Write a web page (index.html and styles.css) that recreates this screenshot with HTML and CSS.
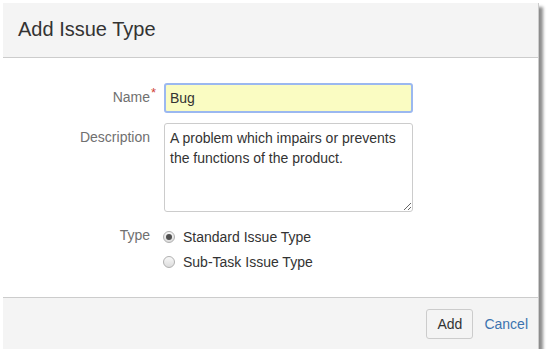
FILE: index.html
```html
<!DOCTYPE html>
<html lang="en">
<head>
    <meta charset="UTF-8">
    <title>Add Issue Type</title>
    <link rel="stylesheet" href="styles.css">
</head>
<body>
    <div class="dialog">
        <div class="dialog-header">
            <h2>Add Issue Type</h2>
        </div>

        <form class="dialog-body">
            <div class="field-group">
                <label for="name">Name<span class="required">*</span></label>
                <input type="text" id="name" class="text name-input" value="Bug">
            </div>

            <div class="field-group">
                <label for="description">Description</label>
                <textarea id="description" class="textarea">A problem which impairs or prevents the functions of the product.</textarea>
            </div>

            <div class="field-group type-group">
                <label>Type</label>
                <div class="radios">
                    <div class="radio">
                        <span class="radio-dot checked"></span>
                        <span>Standard Issue Type</span>
                    </div>
                    <div class="radio">
                        <span class="radio-dot"></span>
                        <span>Sub-Task Issue Type</span>
                    </div>
                </div>
            </div>
        </form>

        <div class="dialog-footer">
            <button class="button">Add</button>
            <a href="#" class="cancel">Cancel</a>
        </div>
    </div>
</body>
</html>
```

FILE: styles.css
```css
* {
    margin: 0;
    padding: 0;
    box-sizing: border-box;
}

body {
    font-family: "Liberation Sans", Arial, sans-serif;
    font-size: 14px;
    color: #333333;
    background: #ffffff;
    padding: 3px 0 0 3px;
}

.dialog {
    width: 536px;
    height: 346px;
    background: #ffffff;
    border-right: 1px solid #cccccc;
    box-shadow: 4px 4px 3px rgba(0, 0, 0, 0.45);
    display: flex;
    flex-direction: column;
}

.dialog-header {
    height: 55px;
    background: #f4f4f4;
    border-bottom: 1px solid #cccccc;
    display: flex;
    align-items: center;
    padding-left: 15px;
}

.dialog-header h2 {
    font-size: 20px;
    font-weight: normal;
    color: #333333;
    padding-bottom: 2px;
}

.dialog-body {
    flex: 1;
    padding-top: 25px;
}

.field-group {
    display: flex;
    align-items: flex-start;
    margin-bottom: 10px;
}

.field-group label {
    width: 161px;
    flex: none;
    text-align: right;
    color: #707070;
    padding-right: 14px;
    padding-top: 6px;
    position: relative;
}

.required {
    color: #d04437;
    position: absolute;
    top: 2px;
    right: 8px;
    font-size: 13px;
}

.text {
    width: 249px;
    height: 30px;
    border: 1px solid #cccccc;
    border-radius: 3px;
    font-family: inherit;
    font-size: 14px;
    color: #333333;
    padding: 0 5px;
}

.name-input {
    background: #fafcc2;
    border: 2px solid #9bb8f0;
    padding: 0 4px;
    outline: none;
}

.textarea {
    width: 249px;
    height: 89px;
    border: 1px solid #cccccc;
    border-radius: 3px;
    font-family: inherit;
    font-size: 14px;
    line-height: 20px;
    color: #333333;
    padding: 4px 5px;
    resize: vertical;
}

.type-group {
    margin-top: 11px;
}

.type-group label {
    padding-top: 4px;
}

.radios {
    display: flex;
    flex-direction: column;
    gap: 5px;
    padding-top: 4px;
}

.radio {
    display: flex;
    align-items: center;
    gap: 8px;
    line-height: 20px;
}

.radio-dot {
    width: 12px;
    height: 12px;
    border-radius: 50%;
    border: 1px solid #b0b0b0;
    background: linear-gradient(#f8f8f8, #dcdcdc);
    display: flex;
    align-items: center;
    justify-content: center;
    margin-left: -1px;
}

.radio-dot.checked::after {
    content: "";
    width: 6px;
    height: 6px;
    border-radius: 50%;
    background: #505050;
}

.dialog-footer {
    height: 52px;
    background: #f4f4f4;
    border-top: 1px solid #cccccc;
    display: flex;
    align-items: center;
    justify-content: flex-end;
    padding-right: 10px;
}

.button {
    height: 30px;
    padding: 0 10px;
    border: 1px solid #cccccc;
    border-radius: 3px;
    background: #f4f4f4;
    font-family: inherit;
    font-size: 14px;
    color: #333333;
    margin-right: 11px;
}

.cancel {
    color: #3b73af;
    text-decoration: none;
}
```
